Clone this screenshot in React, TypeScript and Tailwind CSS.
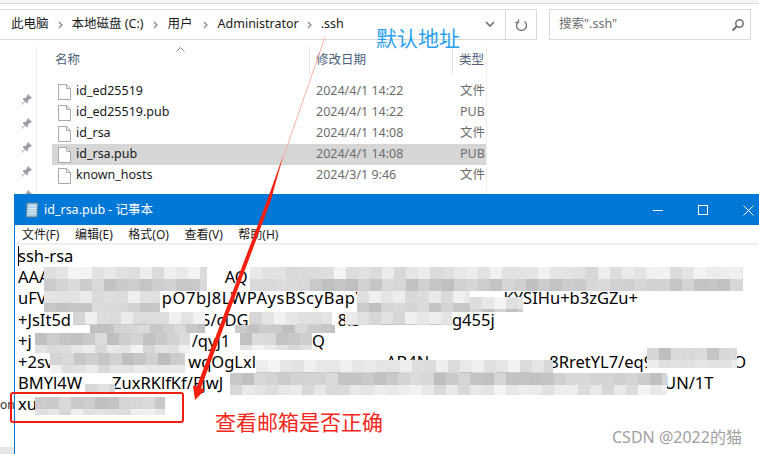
import React from "react";

const cjk = '"Noto Sans","Noto Sans CJK SC",sans-serif';

const blobs: [number, number, number, number][] = [
  [44, 267, 163, 24],
  [250, 267, 493, 24],
  [44, 291, 116, 21],
  [357, 291, 113, 21],
  [470, 297, 53, 15],
  [73, 312, 132, 13],
  [250, 312, 82, 13],
  [345, 312, 107, 13],
  [90, 325, 115, 8],
  [235, 325, 100, 8],
  [35, 333, 155, 20],
  [240, 333, 72, 17],
  [50, 353, 135, 20],
  [256, 360, 297, 13],
  [647, 348, 90, 20],
  [230, 373, 437, 22],
  [85, 384, 30, 10],
  [35, 397, 130, 18],
];

function shade(x: number, y: number) {
  const n = Math.abs(Math.sin(x * 12.9898 + y * 78.233) * 43758.5453);
  const f = n - Math.floor(n);
  const base = y % 24 < 12 ? 214 : 190;
  const v = Math.round(base + f * 30);
  return `rgb(${v},${v},${Math.min(255, v + 2)})`;
}

function Mosaic() {
  const cells: React.ReactNode[] = [];
  blobs.forEach(([bx, by, bw, bh], i) => {
    for (let y = by; y < by + bh; y += 12) {
      for (let x = bx; x < bx + bw; x += 12) {
        cells.push(
          <rect key={`${i}-${x}-${y}`} x={x} y={y} width={Math.min(12, bx + bw - x)} height={Math.min(12, by + bh - y)} fill={shade(x, y)} />
        );
      }
    }
  });
  return <svg className="absolute left-0 top-0" width="759" height="454">{cells}</svg>;
}

function FileIcon() {
  return (
    <svg width="13" height="16" viewBox="0 0 13 16" fill="none" className="shrink-0">
      <path d="M.5.5h8l4 4v11H.5z" fill="#fff" stroke="#a9a9a9" />
      <path d="M8.5.5v4h4" stroke="#a9a9a9" />
    </svg>
  );
}

function Pin() {
  return (
    <svg width="12" height="12" viewBox="0 0 12 12" className="shrink-0">
      <path d="M7 1l4 4-1 .6-1 .1-2 2-.2 1.800L6 10.500 1.500 6l1-.8 1.800-.2 2-2 .1-1z" fill="#9a9ea3" />
      <path d="M3.500 8.500L.5 11.500" stroke="#9a9ea3" />
    </svg>
  );
}

const files = [
  ["id_ed25519", "2024/4/1 14:22", "文件"],
  ["id_ed25519.pub", "2024/4/1 14:22", "PUB"],
  ["id_rsa", "2024/4/1 14:08", "文件"],
  ["id_rsa.pub", "2024/4/1 14:08", "PUB"],
  ["known_hosts", "2024/3/1 9:46", "文件"],
];

function Chevron() {
  return (
    <svg width="5" height="8" viewBox="0 0 5 8" fill="none" className="shrink-0">
      <path d="M1 1l3 3-3 3" stroke="#8a8a8a" strokeWidth="1.300" />
    </svg>
  );
}

function Gap({ w }: { w: number }) {
  return <span className="inline-block shrink-0" style={{ width: w }} />;
}

const lines: (string | number)[][] = [
  ["ssh-rsa"],
  ["AAA", 175, "AQ"],
  ["uFV", 115, "pO7bJ8LWPAysBScyBapY", 138, "KYSIHu+b3zGZu+"],
  ["+JsIt5d", 130, "5/cDGl", 85, "8l3", 91, "g455j"],
  ["+j", 160, "/qyj1", 82, "Q"],
  ["+2sv", 135, "wqOgLxl", 130, "AB4N", 120, "8RretYL7/eq9", 80, "O"],
  ["BMYl4W", 30, "ZuxRKlfKf/FjwJ", 45, "V", 386, "UN/1T"],
  ["xu"],
];

export default function App() {
  return (
    <div className="relative h-[454px] w-[759px] overflow-hidden bg-white text-[#1a1a1a]" style={{ fontFamily: cjk }}>
      <div className="h-[4px] border-b border-[#dcdcdc] bg-[#f5f5f5]" />
      <div className="flex items-stretch pt-[5px]">
        <div className="flex h-[31px] w-[537px] items-center border-y border-r border-[#d9d9d9] pl-[11px] text-[12.500px]">
          <span>此电脑</span>
          <span className="mx-[9px]"><Chevron /></span>
          <span>本地磁盘 (C:)</span>
          <span className="mx-[9.500px]"><Chevron /></span>
          <span>用户</span>
          <span className="mx-[10px]"><Chevron /></span>
          <span>Administrator</span>
          <span className="mx-[8.500px]"><Chevron /></span>
          <span>.ssh</span>
          <span className="ml-auto mr-[10px]">
            <svg width="10" height="7" viewBox="0 0 10 7" fill="none"><path d="M1 1l4 4 4-4" stroke="#6f6f6f" strokeWidth="1.600" /></svg>
          </span>
          <span className="flex h-full w-[31px] items-center justify-center border-l border-[#d9d9d9] text-[#6f6f6f]">
            <svg width="12" height="13" viewBox="0 0 12 13" fill="none"><path d="M3 3a5 5 0 1 0 6 0M3 1v3H0" stroke="#6f6f6f" strokeWidth="1.300" transform="translate(.5 .5)" /></svg>
          </span>
        </div>
        <div className="ml-[12px] flex h-[31px] w-[202px] items-center justify-between border border-[#d9d9d9] pl-[9px] pr-[5px] text-[12.500px] text-[#6d6d6d]">
          <span>搜索".ssh"</span>
          <svg width="14" height="14" viewBox="0 0 14 14" fill="none"><circle cx="8.500" cy="5.500" r="3.700" stroke="#6f6f6f" strokeWidth="1.500" /><path d="M6 8l-4.500 4.500" stroke="#6f6f6f" strokeWidth="2" /></svg>
        </div>
      </div>

      <div className="mt-[7px] flex">
        <div className="flex h-[147px] w-[37px] flex-col items-center gap-[12px] border-r border-[#ededed] pl-[19px] pr-[2px] pt-[46px]">
          {[0, 1, 2, 3, 4].map((i) => <Pin key={i} />)}
        </div>
        <div className="h-[147px] w-[450px] border-r border-[#f0f0f0]">
          <div className="flex h-[27px] items-center text-[12.500px] text-[#4c607a]">
            <div className="relative flex h-full w-[273px] items-center border-r border-[#e3e3e3] pl-[18px]">
              <span>名称</span>
              <svg className="absolute left-[139px] top-0" width="9" height="5" viewBox="0 0 9 5" fill="none"><path d="M.5 4.500l4-4 4 4" stroke="#8a8a8a" /></svg>
            </div>
            <div className="flex h-full w-[143px] items-center border-r border-[#e3e3e3] pl-[6px]">修改日期</div>
            <div className="pl-[6px]">类型</div>
          </div>
          <div className="pt-[7px] text-[12.500px]">
            {files.map(([n, d, t]) => (
              <div key={n} className={`ml-[15px] flex h-[21px] w-[434px] items-center ${n === "id_rsa.pub" ? "bg-[#d6d6d6]" : ""}`}>
                <div className="flex w-[258px] items-center gap-[5px] pl-[6px]"><FileIcon /><span>{n}</span></div>
                <div className="w-[144px] pl-[6px] text-[#6d6d6d]">{d}</div>
                <div className="pl-[6px] text-[#6d6d6d]">{t}</div>
              </div>
            ))}
          </div>
        </div>
      </div>

      <div className="absolute bottom-0 left-[14px] right-0 top-[194px] border-l border-[#0078d7] bg-white">
        <div className="flex h-[31px] items-center bg-[#0078d7] pl-[9px] pt-[1px] text-[12.500px] text-white">
          <svg width="16" height="16" viewBox="0 0 16 16" className="shrink-0">
            <path d="M3 1h11l-1 14H2z" fill="#a8cfe6" stroke="#5d7f96" />
            <path d="M5 4h7M5 6.500h7M4.500 9h7M4.500 11.500h7" stroke="#e8f4fb" />
          </svg>
          <span className="ml-[4px]">id_rsa.pub - 记事本</span>
          <div className="ml-auto flex items-center gap-[35px] pr-[5px]">
            <span className="h-px w-[10px] bg-white" />
            <span className="h-[10px] w-[10px] border border-white" />
            <svg width="11" height="11" viewBox="0 0 11 11" fill="none"><path d="M.5.5l10 10M10.500.5l-10 10" stroke="#fff" /></svg>
          </div>
        </div>
        <div className="flex h-[20px] items-center gap-[15.500px] border-b-2 border-[#f0f0f0] pl-[7px] pt-[2px] text-[12px]">
          <span>文件(F)</span>
          <span>编辑(E)</span>
          <span>格式(O)</span>
          <span>查看(V)</span>
          <span>帮助(H)</span>
        </div>
        <div className="relative pl-[3px] text-[16.500px] leading-[21.200px] text-black">
          <span className="absolute left-[3px] top-[1px] h-[20px] w-px bg-black" />
          {lines.map((l, i) => (
            <div key={i} className="flex h-[21.200px] whitespace-pre">
              {l.map((p, j) =>
                typeof p === "number" ? (
                  <Gap key={j} w={p} />
                ) : (
                  <span key={j} className={p.startsWith("pO7") ? "tracking-[0.6px]" : ""}>{p}</span>
                )
              )}
            </div>
          ))}
        </div>
      </div>
      <span className="absolute left-0 top-[396px] text-[12px] text-[#333]">on</span>
      <div className="absolute bottom-0 left-0 h-[7px] w-[14px] bg-[#e6e6e6]" />

      <Mosaic />

      <svg className="absolute left-0 top-0" width="759" height="454" fill="none">
        <path d="M325 37L272 190" stroke="#f7b0a8" strokeWidth="1" />
        <path d="M283 156L268 198L197 386L193 386L195 400L205 390L201 388L271 200Z" fill="#f5200f" />
        <rect x="11" y="393" width="172" height="29" rx="2" stroke="#f01d10" strokeWidth="2" />
      </svg>

      <span className="absolute left-[376px] top-[24px] text-[21px] leading-[28px] text-[#2a9ff0]">默认地址</span>
      <span className="absolute left-[215px] top-[408px] text-[21px] leading-[28px] text-[#f5261a]">查看邮箱是否正确</span>
      <span className="absolute left-[612px] top-[427px] text-[16px] leading-[20px] text-[#a0a0a0]">CSDN @2022的猫</span>
    </div>
  );
}
